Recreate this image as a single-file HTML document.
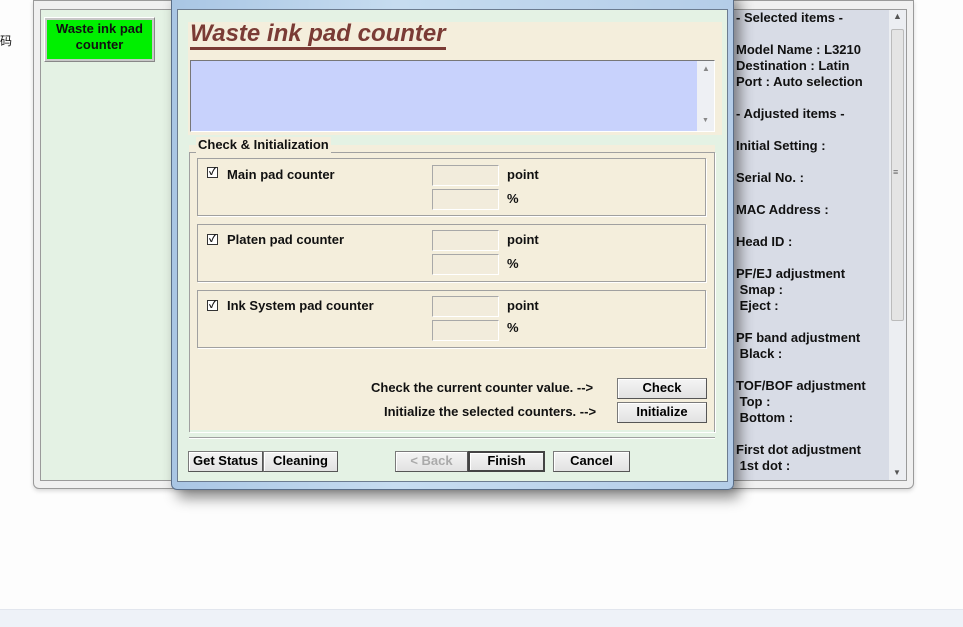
<!DOCTYPE html>
<html><head><meta charset="utf-8"><style>
*{margin:0;padding:0;box-sizing:border-box}
body{width:963px;height:627px;overflow:hidden;background:#fdfdfd;position:relative;font-family:"Liberation Sans","Noto Sans CJK SC",sans-serif;font-weight:bold;font-size:13px;color:#111}
.a{position:absolute}
.btn{position:absolute;background:linear-gradient(#f4f4f4,#e2e2e2);border:1px solid #7a7a7a;border-right-color:#555;border-bottom-color:#555;box-shadow:inset 1px 1px 0 #fff;font-weight:normal;font-size:14px;text-align:center;line-height:18px;color:#000;font-family:"Liberation Sans Narrow","Liberation Sans",sans-serif}
.box{position:absolute;border:1px solid #a0a0a0;box-shadow:1px 1px 0 #fff}
.inp{position:absolute;width:67px;height:21px;border:1px solid #a8a8a8;border-right-color:#fff;border-bottom-color:#fff;background:#f2ecdc}
.cb{position:absolute;width:11px;height:11px;border:1px solid #333;background:#fff;font-size:10px;line-height:9px;text-align:center}
.rl{position:absolute;left:736px;line-height:16px;white-space:pre}
</style></head><body>
<div class="a" style="left:0;top:609px;width:963px;height:18px;background:#eef2f8;border-top:1px solid #e2e6ee"></div>
<div class="a" style="left:0;top:32px;font-weight:normal;font-size:12px">码</div>
<!-- back window -->
<div class="a" style="left:33px;top:0;width:881px;height:489px;background:#f0f0f0;border:1px solid #9a9a9a;border-radius:0 0 6px 6px;box-shadow:0 2px 4px rgba(0,0,0,.15)"></div>
<div class="a" style="left:40px;top:9px;width:140px;height:472px;background:#e4f2e4;border:1px solid #9a9a9a"></div>
<div class="a" style="left:44px;top:17px;width:111px;height:45px;background:#c8c8c8;border:1px solid #fff;border-right-color:#888;border-bottom-color:#888"></div>
<div class="a" style="left:47px;top:20px;width:105px;height:39px;background:#00f000;text-align:center;line-height:16px;padding-top:1px">Waste ink pad<br>counter</div>
<div class="a" style="left:732px;top:9px;width:175px;height:472px;background:#d8dce6;border:1px solid #9a9a9a"></div>
<div class="a" style="left:889px;top:10px;width:17px;height:470px;background:#eceef2"></div>
<div class="a" style="left:891px;top:29px;width:13px;height:92px;background:#e4e4e4;border:1px solid #bbb;border-radius:2px;top:29px;height:292px"></div>
<div class="a" style="left:893px;top:11px;font-size:9px;color:#555">▲</div>
<div class="a" style="left:893px;top:468px;font-size:8px;color:#555">▼</div>
<div class="a" style="left:893px;top:167px;font-size:9px;color:#666;font-weight:normal">≡</div>
<div class="rl" style="top:10px">- Selected items -

Model Name : L3210
Destination : Latin
Port : Auto selection

- Adjusted items -

Initial Setting :

Serial No. :

MAC Address :

Head ID :

PF/EJ adjustment
 Smap :
 Eject :

PF band adjustment
 Black :

TOF/BOF adjustment
 Top :
 Bottom :

First dot adjustment
 1st dot :</div>
<!-- dialog -->
<div class="a" style="left:171px;top:-10px;width:563px;height:500px;border-radius:6px;background:linear-gradient(90deg,#a9c6e4,#c6dcf0 40%,#b4cde8);border:1px solid #5a6e88;box-shadow:6px 8px 14px rgba(0,0,0,.45)"></div>
<div class="a" style="left:177px;top:9px;width:551px;height:473px;background:#e4f2e4;border:1px solid #6c7c90"></div>
<div class="a" style="left:188px;top:22px;width:534px;height:113px;background:#f4eedc"></div>
<div class="a" style="left:190px;top:20px;font-size:24px;font-style:italic;color:#7a3b35;border-bottom:3px solid #7a3b35;line-height:27px">Waste ink pad counter</div>
<div class="a" style="left:190px;top:60px;width:525px;height:72px;background:#c8d2fc;border:1px solid #777;border-right-color:#fff;border-bottom-color:#fff"></div>
<div class="a" style="left:697px;top:61px;width:17px;height:70px;background:#eef0f4"></div>
<div class="a" style="left:702px;top:64px;font-size:8px;color:#888">▲</div>
<div class="a" style="left:702px;top:117px;font-size:7px;color:#888">▼</div>
<div class="a" style="left:189px;top:145px;width:526px;height:285px;background:#f4eedc"></div>
<div class="box" style="left:189px;top:152px;width:526px;height:290px;border-bottom:none;height:280px"></div>
<div class="a" style="left:196px;top:137px;background:#f4eedc;padding:0 2px;line-height:16px">Check &amp; Initialization</div>
<div class="box" style="left:197px;top:158px;width:509px;height:58px"></div>
<div class="box" style="left:197px;top:224px;width:509px;height:58px"></div>
<div class="box" style="left:197px;top:290px;width:509px;height:58px"></div>
<div class="cb" style="left:207px;top:167px">✓</div><div class="a" style="left:227px;top:167px">Main pad counter</div>
<div class="cb" style="left:207px;top:234px">✓</div><div class="a" style="left:227px;top:232px">Platen pad counter</div>
<div class="cb" style="left:207px;top:300px">✓</div><div class="a" style="left:227px;top:298px">Ink System pad counter</div>
<div class="inp" style="left:432px;top:165px"></div><div class="a" style="left:507px;top:167px">point</div>
<div class="inp" style="left:432px;top:189px"></div><div class="a" style="left:507px;top:191px">%</div>
<div class="inp" style="left:432px;top:230px"></div><div class="a" style="left:507px;top:232px">point</div>
<div class="inp" style="left:432px;top:254px"></div><div class="a" style="left:507px;top:256px">%</div>
<div class="inp" style="left:432px;top:296px"></div><div class="a" style="left:507px;top:298px">point</div>
<div class="inp" style="left:432px;top:320px"></div><div class="a" style="left:507px;top:320px">%</div>
<div class="a" style="left:371px;top:380px">Check the current counter value. --&gt;</div>
<div class="a" style="left:384px;top:404px">Initialize the selected counters. --&gt;</div>
<div class="btn" style="left:617px;top:378px;width:90px;height:21px;font-weight:bold;font-size:13px;font-family:'Liberation Sans',sans-serif">Check</div>
<div class="btn" style="left:617px;top:402px;width:90px;height:21px;font-weight:bold;font-size:13px;font-family:'Liberation Sans',sans-serif">Initialize</div>
<div class="a" style="left:189px;top:437px;width:526px;height:2px;border-top:1px solid #a0a0a0;border-bottom:1px solid #fff"></div>
<div class="btn" style="left:188px;top:451px;width:75px;height:21px;font-weight:bold;font-size:13px;font-family:'Liberation Sans',sans-serif">Get Status</div>
<div class="btn" style="left:263px;top:451px;width:75px;height:21px;font-weight:bold;font-size:13px;font-family:'Liberation Sans',sans-serif">Cleaning</div>
<div class="btn" style="left:395px;top:451px;width:73px;height:21px;color:#aaa;font-weight:bold;font-size:13px;font-family:'Liberation Sans',sans-serif">&lt; Back</div>
<div class="btn" style="left:468px;top:451px;width:77px;height:21px;border:2px solid #444;font-weight:bold;font-size:13px;font-family:'Liberation Sans',sans-serif;line-height:16px">Finish</div>
<div class="btn" style="left:553px;top:451px;width:77px;height:21px;font-weight:bold;font-size:13px;font-family:'Liberation Sans',sans-serif">Cancel</div>
</body></html>
